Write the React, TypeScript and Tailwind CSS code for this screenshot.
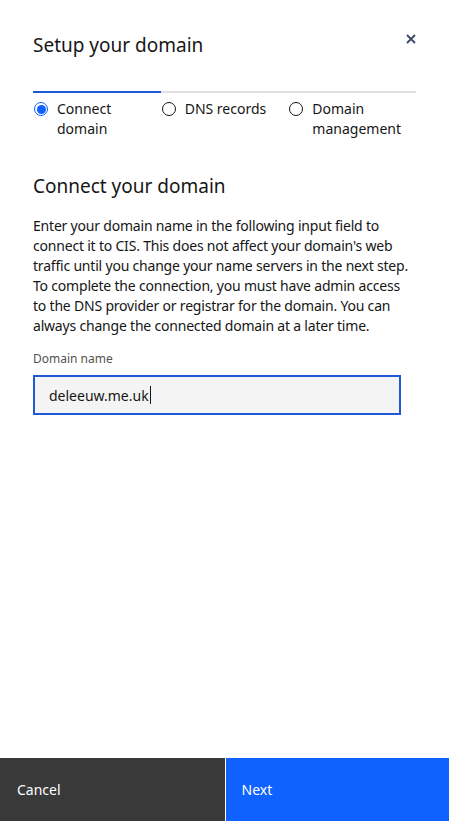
import React from 'react';

const font = { fontFamily: '"Noto Sans", "Open Sans", Arial, sans-serif' };

// ==========================================
// STEP INDICATOR
// ==========================================
function Step({ label, active }: { label: React.ReactNode; active?: boolean }) {
  return (
    <div className="w-[128px] flex flex-col">
      <div className={`h-[2px] ${active ? 'bg-[#1f59d6]' : 'bg-[#e0e0e0]'}`} />
      <div className="flex items-start pt-[6px]">
        <div className="w-[24px] pl-[1px] pt-[3px] shrink-0">
          {active ? (
            <span className="flex items-center justify-center w-[14px] h-[14px] rounded-full border-[1.5px] border-[#0f62fe]">
              <span className="w-[9px] h-[9px] rounded-full bg-[#0f62fe]" />
            </span>
          ) : (
            <span className="block w-[14px] h-[14px] rounded-full border-[1.5px] border-[#161616]" />
          )}
        </div>
        <div className="text-[14px] leading-[20px] text-[#161616]">{label}</div>
      </div>
    </div>
  );
}

export default function App() {
  return (
    <div className="h-screen w-full bg-white flex flex-col text-[#161616]" style={font}>
      <div className="flex-1 px-[33px]">
        {/* Header */}
        <div className="flex items-start justify-between pt-[31px]">
          <h1 className="text-[19px] leading-[28px]">Setup your domain</h1>
          <button className="mt-[2px] mr-[-1px] text-[#3b4666]">
            <svg width="12" height="12" viewBox="0 0 12 12">
              <path d="M2 2 L10 10 M10 2 L2 10" stroke="currentColor" strokeWidth="1.8" />
            </svg>
          </button>
        </div>

        {/* Progress */}
        <div className="flex mt-[32px]">
          <Step active label={<>Connect<br />domain</>} />
          <Step label="DNS records" />
          <Step label={<>Domain<br />management</>} />
        </div>

        <h2 className="text-[19px] leading-[28px] mt-[33px]">Connect your domain</h2>

        <p className="text-[14px] leading-[20px] mt-[16px] tracking-[-0.2px]">
          Enter your domain name in the following input field to connect it to CIS. This does not
          affect your domain's web traffic until you change your name servers in the next step. To
          complete the connection, you must have admin access to the DNS provider or registrar for
          the domain. You can always change the connected domain at a later time.
        </p>

        <label className="block text-[12px] leading-[16px] text-[#525252] mt-[15px]">Domain name</label>
        <div className="mt-[8px] w-[368px] h-[40px] bg-[#f4f4f4] border-2 border-[#1f59d6] flex items-center pl-[14px] text-[14px]">
          <span>deleeuw.me.uk</span>
          <span className="w-px h-[18px] bg-[#161616] ml-px" />
        </div>
      </div>

      {/* Footer */}
      <div className="flex h-[63px] gap-px bg-white">
        <button className="flex-1 bg-[#393939] text-white text-[14px] text-left pl-[17px]">
          Cancel
        </button>
        <button className="flex-1 bg-[#0f62fe] text-white text-[14px] text-left pl-[16px]">
          Next
        </button>
      </div>
    </div>
  );
}
